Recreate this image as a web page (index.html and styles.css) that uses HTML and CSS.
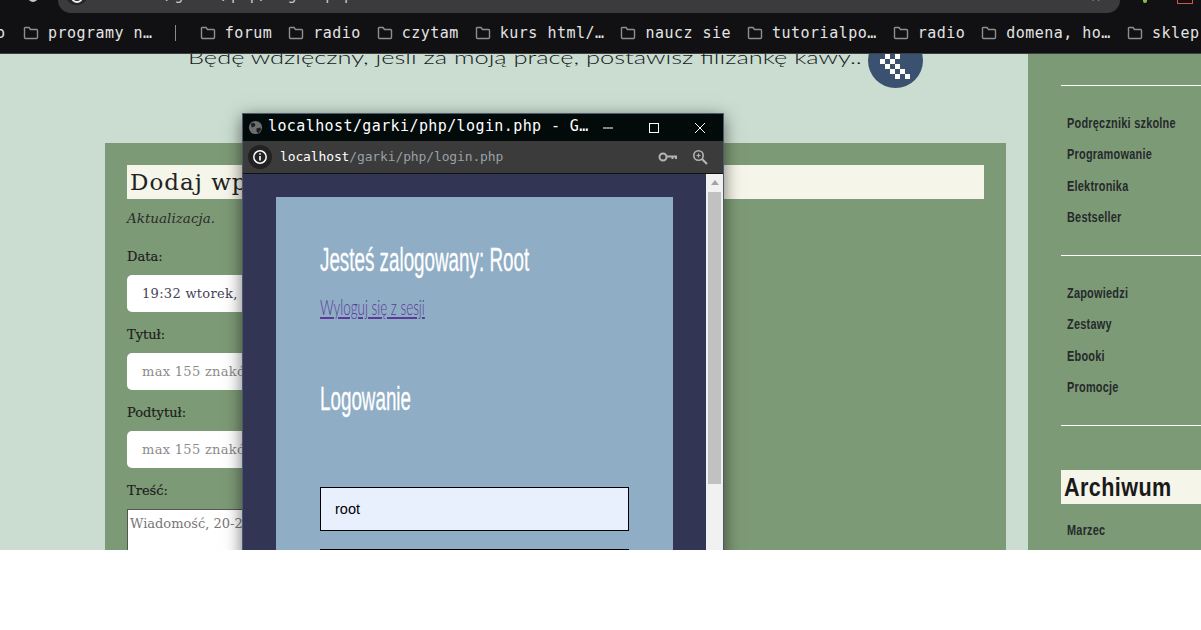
FILE: index.html
```html
<!DOCTYPE html>
<html lang="pl">
<head>
<meta charset="utf-8">
<title>localhost/garki/php/login.php</title>
<link rel="stylesheet" href="styles.css">
</head>
<body>
<div class="screen">
  <header class="chrome">
    <div class="toolbar">
      <span class="tb-back"></span>
      <div class="omnibox">
        <span class="omni-info"><span class="omni-ring"></span></span>
        <span class="omni-text">localhost/garki/php/login.php</span>
        <span class="omni-star">★</span>
      </div>
      <span class="tb-green"></span>
      <span class="tb-red"></span>
    </div>
    <nav class="bookmarks">
      <span class="bm-cut">o</span>
      <span class="bm"><svg class="folder" viewBox="0 0 16 14"><path d="M1.500 3v8.500a1 1 0 0 0 1 1h11a1 1 0 0 0 1-1V4.500a1 1 0 0 0-1-1H7.500L6 1.500H2.500a1 1 0 0 0-1 1.500z"/></svg>programy n…</span>
      <span class="bm-sep"></span>
      <span class="bm"><svg class="folder" viewBox="0 0 16 14"><path d="M1.500 3v8.500a1 1 0 0 0 1 1h11a1 1 0 0 0 1-1V4.500a1 1 0 0 0-1-1H7.500L6 1.500H2.500a1 1 0 0 0-1 1.500z"/></svg>forum</span>
      <span class="bm"><svg class="folder" viewBox="0 0 16 14"><path d="M1.500 3v8.500a1 1 0 0 0 1 1h11a1 1 0 0 0 1-1V4.500a1 1 0 0 0-1-1H7.500L6 1.500H2.500a1 1 0 0 0-1 1.500z"/></svg>radio</span>
      <span class="bm"><svg class="folder" viewBox="0 0 16 14"><path d="M1.500 3v8.500a1 1 0 0 0 1 1h11a1 1 0 0 0 1-1V4.500a1 1 0 0 0-1-1H7.500L6 1.500H2.500a1 1 0 0 0-1 1.500z"/></svg>czytam</span>
      <span class="bm"><svg class="folder" viewBox="0 0 16 14"><path d="M1.500 3v8.500a1 1 0 0 0 1 1h11a1 1 0 0 0 1-1V4.500a1 1 0 0 0-1-1H7.500L6 1.500H2.500a1 1 0 0 0-1 1.500z"/></svg>kurs html/…</span>
      <span class="bm"><svg class="folder" viewBox="0 0 16 14"><path d="M1.500 3v8.500a1 1 0 0 0 1 1h11a1 1 0 0 0 1-1V4.500a1 1 0 0 0-1-1H7.500L6 1.500H2.500a1 1 0 0 0-1 1.500z"/></svg>naucz sie</span>
      <span class="bm"><svg class="folder" viewBox="0 0 16 14"><path d="M1.500 3v8.500a1 1 0 0 0 1 1h11a1 1 0 0 0 1-1V4.500a1 1 0 0 0-1-1H7.500L6 1.500H2.500a1 1 0 0 0-1 1.500z"/></svg>tutorialpo…</span>
      <span class="bm"><svg class="folder" viewBox="0 0 16 14"><path d="M1.500 3v8.500a1 1 0 0 0 1 1h11a1 1 0 0 0 1-1V4.500a1 1 0 0 0-1-1H7.500L6 1.500H2.500a1 1 0 0 0-1 1.500z"/></svg>radio</span>
      <span class="bm"><svg class="folder" viewBox="0 0 16 14"><path d="M1.500 3v8.500a1 1 0 0 0 1 1h11a1 1 0 0 0 1-1V4.500a1 1 0 0 0-1-1H7.500L6 1.500H2.500a1 1 0 0 0-1 1.500z"/></svg>domena, ho…</span>
      <span class="bm"><svg class="folder" viewBox="0 0 16 14"><path d="M1.500 3v8.500a1 1 0 0 0 1 1h11a1 1 0 0 0 1-1V4.500a1 1 0 0 0-1-1H7.500L6 1.500H2.500a1 1 0 0 0-1 1.500z"/></svg>sklep</span>
    </nav>
  </header>

  <div class="page">
    <main class="main">
      <div class="thanks">
        <p class="thanks-text">Będę wdzięczny, jeśli za moją pracę, postawisz filiżankę kawy..</p>
        <div class="coffee">
          <svg viewBox="0 0 55 55" width="55" height="55">
            <g fill="#fff">
              <rect x="17" y="21" width="5" height="5"/><rect x="27" y="21" width="5" height="5"/>
              <rect x="12" y="26" width="5" height="5"/><rect x="22" y="26" width="5" height="5"/>
              <rect x="17" y="31" width="5" height="5"/><rect x="27" y="31" width="5" height="5"/>
              <rect x="22" y="36" width="5" height="5"/><rect x="32" y="36" width="5" height="5"/>
              <rect x="27" y="41" width="5" height="5"/><rect x="37" y="41" width="5" height="5"/>
            </g>
          </svg>
        </div>
      </div>

      <section class="card">
        <h1 class="card-title">Dodaj wpis</h1>
        <p class="card-note">Aktualizacja.</p>
        <label class="field-label">Data:</label>
        <div class="field field-value">19:32 wtorek, 29 marca 2022</div>
        <label class="field-label">Tytuł:</label>
        <div class="field field-hint">max 155 znaków</div>
        <label class="field-label">Podtytuł:</label>
        <div class="field field-hint">max 155 znaków</div>
        <label class="field-label">Treść:</label>
        <div class="textarea">Wiadomość, 20-2000 znaków</div>
      </section>
    </main>

    <aside class="sidebar">
      <ul class="side-list">
        <li>Podręczniki szkolne</li><li>Programowanie</li><li>Elektronika</li><li>Bestseller</li>
      </ul>
      <ul class="side-list">
        <li>Zapowiedzi</li><li>Zestawy</li><li>Ebooki</li><li>Promocje</li>
      </ul>
      <div class="side-rule"></div>
      <h2 class="side-title"><span class="side-title-text">Archiwum</span></h2>
      <ul class="side-plain"><li>Marzec</li></ul>
    </aside>
  </div>

  <div class="popup">
    <div class="popup-title">
      <svg class="globe" viewBox="0 0 16 16"><circle cx="8" cy="8" r="7" fill="#6b6f70"/><path d="M3 4l3-1 2 2-1 2-3 1zM9 9l4-1 1 2-3 4-2-2z" fill="#1b1f20"/></svg>
      <span class="popup-name">localhost/garki/php/login.php - G…</span>
      <div class="win-buttons">
        <svg class="win-btn" viewBox="0 0 46 27"><path d="M18 14h10" stroke="#fff" fill="none"/></svg>
        <svg class="win-btn" viewBox="0 0 46 27"><rect x="18.500" y="9.500" width="9" height="9" stroke="#fff" fill="none"/></svg>
        <svg class="win-btn" viewBox="0 0 46 27"><path d="M18 9l10 10M28 9l-10 10" stroke="#fff" fill="none"/></svg>
      </div>
    </div>
    <div class="popup-address">
      <span class="info"><svg viewBox="0 0 16 16" width="16" height="16"><circle cx="8" cy="8" r="6.200" fill="none" stroke="#fff" stroke-width="1.500"/><path d="M8 7v4.500M8 4.300v1.500" stroke="#fff" stroke-width="1.600" fill="none"/></svg></span>
      <span class="addr"><span class="addr-host">localhost</span>/garki/php/login.php</span>
      <svg class="addr-icon" viewBox="0 0 20 12" width="20" height="12"><circle cx="5" cy="6" r="3.500" fill="none" stroke="#b4b4b4" stroke-width="2"/><path d="M8.500 4.500H19v3.500h-2V6.500h-1.500V8h-2V6.500h-5z" fill="#b4b4b4"/></svg>
      <svg class="addr-icon addr-zoom" viewBox="0 0 16 16" width="16" height="16"><circle cx="6.500" cy="6.500" r="4.700" fill="none" stroke="#b4b4b4" stroke-width="1.600"/><path d="M10 10l5 5" stroke="#b4b4b4" stroke-width="2.200"/><path d="M4.500 6.500h4M6.500 4.500v4" stroke="#b4b4b4" stroke-width="1.200"/></svg>
    </div>
    <div class="popup-body">
      <div class="popup-scroll">
        <div class="login">
          <h2 class="login-title">Jesteś zalogowany: Root</h2>
          <a class="login-link" href="#">Wyloguj się z sesji</a>
          <h2 class="login-title login-second">Logowanie</h2>
          <div class="login-input">root</div>
          <div class="login-input"></div>
        </div>
      </div>
      <div class="scrollbar">
        <span class="scroll-up"></span>
        <span class="scroll-thumb"></span>
      </div>
    </div>
  </div>
</div>
</body>
</html>
```
FILE: styles.css
```css
* { box-sizing: border-box; }
html, body { margin: 0; padding: 0; background: #fff; }
body { width: 1201px; height: 630px; overflow: hidden; }
ul { list-style: none; margin: 0; padding: 0; }

.screen { position: relative; width: 1201px; height: 550px; overflow: hidden; display: flex; flex-direction: column; }

.chrome { position: relative; z-index: 2; background: #111113; height: 54px; flex: none; border-bottom: 1px solid #3c3f3e; }
.toolbar { height: 13px; display: flex; overflow: hidden; padding-left: 28px; }
.tb-back { width: 10px; height: 10px; margin-top: -8px; border: 2px solid #c8c8c8; border-radius: 50%; flex: none; }
.omnibox { width: 1062px; margin-left: 20px; height: 13px; background: #3b3b3d; border-radius: 0 0 14px 14px; overflow: hidden; display: flex; flex: none; }
.omni-info { width: 23px; height: 23px; margin: -18px 0 0 7px; border-radius: 50%; background: #252527; display: flex; align-items: flex-end; justify-content: center; padding-bottom: 2px; flex: none; }
.omni-ring { width: 12px; height: 12px; border: 2px solid #eee; border-radius: 50%; }
.omni-text { margin: -13px 0 0 -8px; height: 17px; font: 15px/16px "DejaVu Sans Mono", monospace; letter-spacing: .4px; color: #c8c8c8; white-space: nowrap; flex: none; }
.omni-star { margin: -12px 18px 0 auto; height: 16px; font: 14px/16px "DejaVu Sans", sans-serif; color: #c8c8c8; flex: none; }
.tb-green { width: 4px; height: 3px; margin: 0 0 0 23px; background: #7cc44a; border-radius: 0 0 3px 3px; flex: none; }
.tb-red { width: 16px; height: 4px; margin: 0 0 0 30px; border: 1px solid #d9544a; border-top: 0; flex: none; }

.bookmarks { height: 40px; display: flex; align-items: center; font: 15px/18px "DejaVu Sans Mono", monospace; color: #e4e4e4; white-space: nowrap; overflow: hidden; letter-spacing: .48px; }
.bm-cut { width: 27px; margin-left: -4px; flex: none; }
.bm { display: flex; align-items: center; margin-right: 16px; flex: none; }
.folder { width: 16px; height: 14px; margin-right: 9px; fill: none; stroke: #8f8f8f; stroke-width: 1.400; flex: none; }
.bm-sep { width: 1px; height: 16px; background: #8a8a8a; margin: 0 24px 0 6px; flex: none; }

.page { flex: 1; display: flex; background: #cbddd1; min-height: 0; }
.main { width: 1028px; flex: none; padding-left: 105px; padding-right: 22px; }
.thanks { height: 89px; display: flex; align-items: flex-start; padding-left: 83px; }
.thanks-text { margin: -9px 0 0; width: 680px; font: 300 18px/24px "Lato", "Liberation Sans", sans-serif; color: #121a22; white-space: nowrap; transform: scaleX(1.413); transform-origin: left top; }
.coffee { width: 55px; height: 55px; margin-top: -21px; border-radius: 50%; background: #3a5270; flex: none; overflow: hidden; }
.coffee svg { display: block; }

.card { background: #7d9a76; padding: 22px 22px 0; height: 500px; color: #222; }
.card-title { margin: 0; height: 34px; background: #f5f5e9; font: 400 23px/34px "DejaVu Serif", serif; letter-spacing: 1px; padding-left: 3px; color: #222; }
.card-note { margin: 11px 0 0; height: 16px; font: italic 13.500px/16px "DejaVu Serif", serif; color: #2b2b2b; }
.field-label { display: block; height: 18px; margin-top: 21px; font: 400 13px/20px "DejaVu Serif", serif; color: #1d1d1d; -webkit-text-stroke: .2px #1d1d1d; }
.field { width: 400px; height: 37px; margin-top: 10px; margin-bottom: -8px; background: #fff; border-radius: 5px; padding-left: 15px; font: 13px/37px "DejaVu Serif", serif; letter-spacing: .3px; }
.field-value { color: #445; }
.field-hint { color: #8b8b8b; }
.textarea { width: 400px; margin-top: 10px; height: 60px; background: #fff; border: 1px solid #555; border-bottom: 0; padding: 6px 2px; font: 13px/16px "DejaVu Serif", serif; color: #777; }

.sidebar { flex: 1; background: #7d9a76; padding: 31px 0 0 33px; color: #252a2b; }
.side-list { border-top: 1px solid #fff; padding-top: 22px; height: 170px; }
.side-list li { height: 31.300px; margin-left: 6px; font: 700 14px/31px "Liberation Sans", sans-serif; letter-spacing: .3px; white-space: nowrap; transform: scaleX(.78); transform-origin: left center; }
.side-rule { border-top: 1px solid #fff; height: 45px; }
.side-title { margin: 0; height: 34px; background: #f5f5e9; font: 700 26px/34px "Liberation Sans", sans-serif; padding-left: 3px; color: #1a1a1a; letter-spacing: .5px; }
.side-title-text { display: inline-block; transform: scaleX(.83); transform-origin: left center; }
.side-plain { margin-top: 11px; }
.side-plain li { margin-left: 6px; font: 700 14px/31px "Liberation Sans", sans-serif; letter-spacing: .3px; transform: scaleX(.78); transform-origin: left center; }

.popup { position: absolute; left: 242px; top: 113px; width: 482px; height: 520px; background: #323553; border: 1px solid #4a5a6a; border-bottom: 0; box-shadow: 0 4px 16px rgba(0,0,0,.55); display: flex; flex-direction: column; }
.popup-title { height: 27px; flex: none; background: #020a0a; display: flex; align-items: center; padding-left: 5px; color: #fff; }
.globe { width: 15px; height: 15px; margin-right: 5px; flex: none; }
.popup-name { margin-top: -3px; font: 15px/20px "DejaVu Sans Mono", monospace; width: 322px; white-space: nowrap; overflow: hidden; letter-spacing: .4px; flex: none; }
.win-buttons { margin-left: -5px; display: flex; flex: none; }
.win-btn { width: 46px; height: 27px; display: block; flex: none; }
.popup-address { height: 33px; flex: none; background: #3b3b3b; border-bottom: 1px solid #111; display: flex; align-items: center; padding-left: 5px; }
.info { width: 24px; height: 24px; border-radius: 50%; background: #222; display: flex; align-items: center; justify-content: center; flex: none; margin-right: 8px; }
.addr { font: 13px/18px "DejaVu Sans Mono", monospace; color: #9aa0a6; letter-spacing: -.13px; }
.addr-host { color: #fff; }
.addr-icon { flex: none; margin-left: auto; }
.addr-zoom { margin-left: 14px; margin-right: 15px; }
.popup-body { flex: 1; display: flex; min-height: 0; }
.popup-scroll { flex: 1; min-width: 0; padding: 23px 33px 0; }
.login { background: #8fadc5; height: 460px; padding: 43px 44px 0; overflow: hidden; }
.login-title { margin: 0; font: 400 33px/40px "Liberation Sans", sans-serif; color: #fff; white-space: nowrap; transform: scaleX(.57); transform-origin: left center; -webkit-text-stroke: .3px #fff; }
.login-link { display: block; margin-top: 14px; font: 300 22px/26px "Lato", "Liberation Sans", sans-serif; color: #5b3a9c; white-space: nowrap; transform: scaleX(.61); transform-origin: left center; }
.login-second { margin-top: 59px; }
.login-input { height: 44px; margin-top: 68px; background: #e8f0fd; border: 1px solid #000; padding-left: 14px; font: 14.500px/42px "Liberation Sans", sans-serif; color: #000; }
.login-input + .login-input { margin-top: 18px; }
.scrollbar { width: 17px; flex: none; background: #f1f1f1; padding: 0 2px; }
.scroll-up { display: block; height: 18px; position: relative; }
.scroll-up::after { content: ""; position: absolute; left: 3px; top: 6px; border: 4px solid transparent; border-top: 0; border-bottom: 5px solid #a3a3a3; }
.scroll-thumb { display: block; height: 292px; background: #c1c1c1; }
```
